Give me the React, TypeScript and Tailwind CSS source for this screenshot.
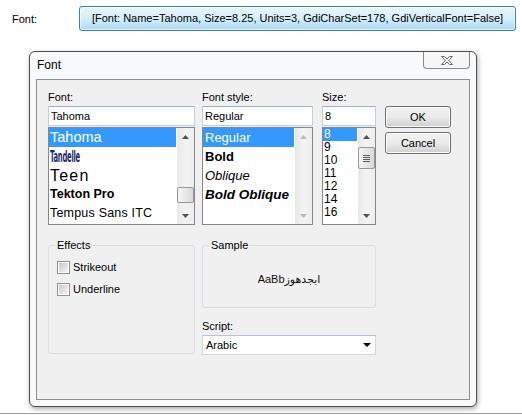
import React from "react";

function Tri({ up, color }: { up?: boolean; color: string }) {
  return (
    <svg width="7" height="4" viewBox="0 0 7 4">
      {up ? <polygon points="0,4 7,4 3.5,0" fill={color} /> : <polygon points="0,0 7,0 3.5,4" fill={color} />}
    </svg>
  );
}

function VScroll({
  disabled,
  spacer,
  thumb,
  grip,
}: {
  disabled?: boolean;
  spacer?: string;
  thumb?: string;
  grip?: boolean;
}) {
  const c = disabled ? "#bcbcbc" : "#505050";
  return (
    <div className="w-[17px] h-full flex flex-col bg-gradient-to-r from-[#e8e8e8] via-[#f3f3f3] to-[#eeeeee]">
      <div className="h-[17px] flex items-center justify-center">
        <Tri up color={c} />
      </div>
      <div className="flex-1 flex flex-col">
        {spacer && <div className={spacer} />}
        {thumb && (
          <div
            className={`${thumb} border border-[#979797] rounded-[2px] bg-gradient-to-r from-[#f4f4f4] via-[#e8e8e8] to-[#d8d8d8] flex flex-col items-center justify-center gap-[1px]`}
          >
            {grip && (
              <>
                <div className="w-[7px] h-[1px] bg-[#5d5d5d]" />
                <div className="w-[7px] h-[1px] bg-[#5d5d5d]" />
                <div className="w-[7px] h-[1px] bg-[#5d5d5d]" />
                <div className="w-[7px] h-[1px] bg-[#5d5d5d]" />
              </>
            )}
          </div>
        )}
      </div>
      <div className="h-[17px] flex items-center justify-center">
        <Tri color={c} />
      </div>
    </div>
  );
}

function Input({ value, w }: { value: string; w: string }) {
  return (
    <div
      className={`${w} h-[20px] bg-white border border-[#c3d0e0] border-t-[#9db1cb] flex items-center pl-[2px] text-[11px] leading-[13px] text-black`}
    >
      {value}
    </div>
  );
}

function Check({ label }: { label: string }) {
  return (
    <div className="flex items-center h-[13px]">
      <div className="w-[13px] h-[13px] border border-[#8e8f8f] bg-white p-[1px]">
        <div className="w-full h-full bg-gradient-to-br from-[#cbcbcb] to-[#f4f4f4]" />
      </div>
      <span className="ml-[3px] text-[11px] leading-[13px] text-black">{label}</span>
    </div>
  );
}

function Button({ label }: { label: string }) {
  return (
    <div className="w-[66px] h-[22px] rounded-[3px] border border-[#707070] bg-gradient-to-b from-[#f2f2f2] via-[#ebebeb] to-[#cfcfcf] shadow-[inset_0_0_0_1px_#fcfcfc] flex items-center justify-center text-[11px] text-black">
      {label}
    </div>
  );
}

export default function App() {
  return (
    <div className="w-[522px] h-[415px] bg-white overflow-hidden flex flex-col font-['Liberation_Sans','DejaVu_Sans',Arial,sans-serif] text-black">
      {/* top row */}
      <div className="flex items-center mt-[6px] h-[25px]">
        <span className="ml-[12px] mt-[1px] text-[11px] leading-[13px]">Font:</span>
        <div className="ml-[42px] w-[437px] h-[25px] rounded-[3px] border border-[#3c7fb1] bg-gradient-to-b from-[#eaf6fd] via-[#d5eefc] to-[#a9daf6] shadow-[inset_0_0_0_1px_rgba(255,255,255,0.6)] flex items-center justify-center text-[11px] leading-[13px]">
          [Font: Name=Tahoma, Size=8.25, Units=3, GdiCharSet=178, GdiVerticalFont=False]
        </div>
      </div>

      {/* dialog */}
      <div className="ml-[29px] mt-[20px] w-[448px] h-[356px] rounded-[6px] border border-[#4f4f4f] bg-[#f8f9fa] shadow-[1px_2px_5px_rgba(0,0,0,0.35)] flex flex-col">
        <div className="h-[27px] flex items-start">
          <span className="ml-[7px] mt-[6px] text-[12px] leading-[14px]">Font</span>
          <div className="ml-auto mr-[6px] w-[47px] h-[17px] rounded-b-[4px] border border-t-0 border-[#8a8a8a] bg-[#f6f6f6] flex items-center justify-center">
            <svg width="12" height="9" viewBox="0 0 12 9">
              <polygon
                points="0.5,0.5 3.5,0.5 6,3 8.5,0.5 11.5,0.5 7.7,4.5 11.5,8.5 8.5,8.5 6,6 3.5,8.5 0.5,8.5 4.3,4.5"
                fill="#f2f2f2"
                stroke="#6a6a6a"
                strokeWidth="1"
                strokeLinejoin="round"
              />
            </svg>
          </div>
        </div>

        {/* client */}
        <div className="mx-[6px] h-[321px] border border-[#8e8e8e] bg-[#f0f0f0] pl-[11px] flex flex-col">
          <div className="flex items-start">
            {/* Font column */}
            <div className="w-[147px] flex flex-col pt-[11px]">
              <span className="text-[11px] leading-[13px]">Font:</span>
              <div className="mt-[2px]">
                <Input value="Tahoma" w="w-[147px]" />
              </div>
              <div className="mt-[1px] h-[98px] border border-[#828790] bg-white flex">
                <div className="flex-1 flex flex-col pr-[1px]">
                  <div className="h-[19px] bg-[#3399ff] text-white text-[14.5px] leading-[19px] pl-[1px]">Tahoma</div>
                  <div className="h-[19px] leading-[19px] pl-[1px] overflow-hidden">
                    <span className="inline-block origin-left scale-x-[0.45] font-['DejaVu_Sans'] font-bold text-[15px] tracking-[-0.5px] text-[#1b2a6b]">
                      Tandelle
                    </span>
                  </div>
                  <div className="h-[19px] leading-[19px] pl-[1px] text-[16px] tracking-[1.2px]">Teen</div>
                  <div className="h-[19px] leading-[19px] pl-[1px] text-[12.5px] font-bold">Tekton Pro</div>
                  <div className="h-[19px] leading-[19px] pl-[1px] text-[12.5px] tracking-[0.2px]">Tempus Sans ITC</div>
                </div>
                <VScroll spacer="h-[42px]" thumb="h-[16px]" />
              </div>
            </div>

            {/* Font style column */}
            <div className="ml-[7px] w-[111px] flex flex-col pt-[11px]">
              <span className="text-[11px] leading-[13px]">Font style:</span>
              <div className="mt-[2px]">
                <Input value="Regular" w="w-[111px]" />
              </div>
              <div className="mt-[1px] h-[98px] border border-[#828790] bg-white flex">
                <div className="flex-1 flex flex-col pr-[1px]">
                  <div className="h-[19px] bg-[#3399ff] text-white text-[13px] leading-[19px] pl-[2px]">Regular</div>
                  <div className="h-[19px] leading-[19px] pl-[2px] text-[13px] font-bold">Bold</div>
                  <div className="h-[19px] leading-[19px] pl-[2px] text-[13px] italic">Oblique</div>
                  <div className="h-[19px] leading-[19px] pl-[2px] text-[13.5px] font-bold italic whitespace-nowrap">Bold Oblique</div>
                </div>
                <VScroll disabled />
              </div>
            </div>

            {/* Size column */}
            <div className="ml-[9px] w-[54px] flex flex-col pt-[11px]">
              <span className="text-[11px] leading-[13px]">Size:</span>
              <div className="mt-[2px]">
                <Input value="8" w="w-[54px]" />
              </div>
              <div className="mt-[1px] h-[98px] border border-[#828790] bg-white flex">
                <div className="flex-1 flex flex-col pr-[1px] text-[12px] leading-[13px]">
                  <div className="h-[13px] bg-[#3399ff] text-white pl-[1px]">8</div>
                  <div className="h-[13px] pl-[1px]">9</div>
                  <div className="h-[13px] pl-[1px]">10</div>
                  <div className="h-[13px] pl-[1px]">11</div>
                  <div className="h-[13px] pl-[1px]">12</div>
                  <div className="h-[13px] pl-[1px]">14</div>
                  <div className="h-[13px] pl-[1px]">16</div>
                </div>
                <VScroll spacer="h-[2px]" thumb="h-[22px]" grip />
              </div>
            </div>

            {/* Buttons */}
            <div className="ml-[9px] mt-[26px] flex flex-col gap-[4px]">
              <Button label="OK" />
              <Button label="Cancel" />
            </div>
          </div>

          {/* bottom section */}
          <div className="flex items-start mt-[14px]">
            <fieldset className="w-[147px] border border-[#d5dfe5] rounded-[3px]">
              <legend className="ml-[6px] px-[2px] text-[11px] leading-[13px]">Effects</legend>
              <div className="h-[101px] pl-[8px] pt-[9px] flex flex-col gap-[9px]">
                <Check label="Strikeout" />
                <Check label="Underline" />
              </div>
            </fieldset>

            <div className="ml-[7px] w-[174px] flex flex-col">
              <fieldset className="w-[174px] border border-[#d5dfe5] rounded-[3px]">
                <legend className="ml-[6px] px-[2px] text-[11px] leading-[13px]">Sample</legend>
                <div className="h-[55px] flex items-center justify-center text-[11px] leading-[13px] text-[#101010]">
                  AaBbابجدهوز
                </div>
              </fieldset>
              <span className="mt-[12px] text-[11px] leading-[13px]">Script:</span>
              <div className="mt-[2px] h-[20px] bg-white border border-[#d0d7e2] border-t-[#b7c3d3] flex items-center pl-[3px] pr-[4px] text-[11px] leading-[13px]">
                <span>Arabic</span>
                <span className="ml-auto">
                  <svg width="8" height="4" viewBox="0 0 8 4">
                    <polygon points="0,0 8,0 4,4" fill="#000" />
                  </svg>
                </span>
              </div>
            </div>
          </div>
        </div>
      </div>

      <div className="mt-auto h-[1px] bg-[#a0a0a0]" />
      <div className="h-[1px] bg-white" />
    </div>
  );
}
